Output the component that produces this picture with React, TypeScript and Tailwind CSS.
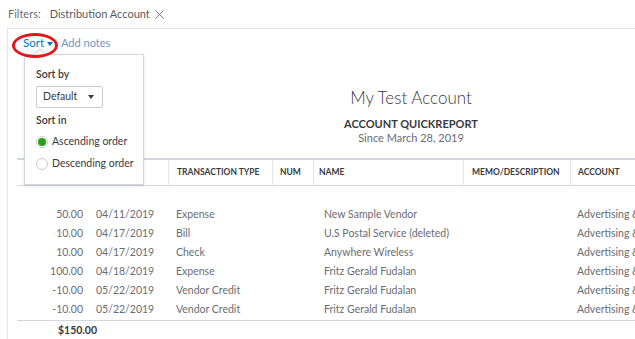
import { X } from 'lucide-react';

const rows = [
  { amount: '50.00', date: '04/11/2019', type: 'Expense', name: 'New Sample Vendor' },
  { amount: '10.00', date: '04/17/2019', type: 'Bill', name: 'U.S Postal Service (deleted)' },
  { amount: '10.00', date: '04/17/2019', type: 'Check', name: 'Anywhere Wireless' },
  { amount: '100.00', date: '04/18/2019', type: 'Expense', name: 'Fritz Gerald Fudalan' },
  { amount: '-10.00', date: '05/22/2019', type: 'Vendor Credit', name: 'Fritz Gerald Fudalan' },
  { amount: '-10.00', date: '05/22/2019', type: 'Vendor Credit', name: 'Fritz Gerald Fudalan' },
];

const cols = 'grid grid-cols-[71px_80px_104px_41px_150px_107px_200px]';

function SortMenu() {
  return (
    <div className="absolute left-[16px] top-[25px] w-[120px] h-[131px] bg-white border border-[#d4d7dc] shadow-[0_1px_3px_rgba(0,0,0,0.12)] z-10">
      {/* notch */}
      <div className="absolute left-[11px] -top-[5px] w-[8px] h-[8px] rotate-45 bg-white border-l border-t border-[#d4d7dc]" />
      <div className="pl-[11px] pt-[12px] text-[10.5px] text-[#393a3d]">
        <div className="font-semibold leading-[14px]">Sort by</div>
        <div className="mt-[5px] w-[67px] h-[22px] border border-[#c7cbd1] rounded-[2px] flex items-center justify-between pl-[6px] pr-[8px]">
          <span className="text-[#393a3d]">Default</span>
          <span className="w-0 h-0 border-l-[3px] border-r-[3px] border-t-[4px] border-l-transparent border-r-transparent border-t-[#393a3d]" />
        </div>
        <div className="mt-[5px] font-semibold leading-[14px]">Sort in</div>
        <div className="mt-[7px] flex items-center gap-[4px] h-[16px]">
          <span className="w-[12px] h-[12px] rounded-full border border-[#c7cbd1] flex items-center justify-center">
            <span className="w-[8px] h-[8px] rounded-full bg-[#2ca01c]" />
          </span>
          <span className="text-[#393a3d]">Ascending order</span>
        </div>
        <div className="mt-[6px] flex items-center gap-[4px] h-[16px]">
          <span className="w-[12px] h-[12px] rounded-full border border-[#c7cbd1]" />
          <span className="text-[#393a3d]">Descending order</span>
        </div>
      </div>
    </div>
  );
}

export default function App() {
  return (
    <div className="relative w-[635px] h-[339px] bg-white overflow-hidden font-['Lato',sans-serif] text-[#393a3d]">
      <div className="h-[28px] flex items-center pl-[8px] text-[11px]">
        <span className="text-[#6b6c72]">Filters:</span>
        <span className="ml-[9px] text-[#5a5b60]">Distribution Account</span>
        <X className="ml-[2px] w-[15px] h-[15px] text-[#6b6c72]" strokeWidth={1.4} />
      </div>

      <div className="relative ml-[7px] h-[311px] border-l border-t border-[#e3e5e8]">
        <div className="h-[28px] flex items-center pl-[15px] text-[11.5px]">
          <span className="text-[#0077c5]">Sort</span>
          <span className="ml-[3px] mt-[1px] w-0 h-0 border-l-[3.5px] border-r-[3.5px] border-t-[4px] border-l-transparent border-r-transparent border-t-[#0077c5]" />
          <span className="ml-[8px] text-[11px] text-[#6d95be]">Add notes</span>
        </div>

        {/* red highlight circle */}
        <div className="absolute left-[4px] top-[4px] w-[46px] h-[25px] rounded-[50%] border-[3px] border-[#e8141b] z-20" />

        <SortMenu />

        <div className="ml-[303px] w-[200px] text-center">
          <div className="mt-[30px] text-[17px] font-light leading-[22px] text-[#393a3d]">My Test Account</div>
          <div className="mt-[8px] text-[11px] font-bold leading-[14px] text-[#393a3d]">ACCOUNT QUICKREPORT</div>
          <div className="text-[11px] leading-[14px] text-[#6b6c72]">Since March 28, 2019</div>
        </div>

        <div className="ml-[9px] mt-[13px] w-[760px]">
          <div className={`${cols} h-[28px] border-t-2 border-b border-[#d4d7dc] text-[8.5px] font-bold text-[#393a3d] items-center`}>
            <div />
            <div />
            <div className="pl-[8px] border-l border-[#e3e5e8] h-full flex items-center">TRANSACTION TYPE</div>
            <div className="pl-[7px] border-l border-[#e3e5e8] h-full flex items-center">NUM</div>
            <div className="pl-[5px] border-l border-[#e3e5e8] h-full flex items-center">NAME</div>
            <div className="pl-[8px] border-l border-[#e3e5e8] h-full flex items-center">MEMO/DESCRIPTION</div>
            <div className="pl-[7px] border-l border-[#e3e5e8] h-full flex items-center">ACCOUNT</div>
          </div>
          <div className="h-[19px]" />
          <div className="border-b border-[#d4d7dc] pb-[1px]">
            {rows.map((r, i) => (
              <div key={i} className={`${cols} h-[19px] items-center text-[10.5px] text-[#6b6c72]`}>
                <div className="text-right pr-[5px]">{r.amount}</div>
                <div className="pl-[8px]">{r.date}</div>
                <div className="pl-[8px]">{r.type}</div>
                <div className="pl-[7px]"></div>
                <div className="pl-[11px]">{r.name}</div>
                <div className="pl-[8px]"></div>
                <div className="pl-[7px] whitespace-nowrap">Advertising &amp; Marketing</div>
              </div>
            ))}
          </div>
          <div className="h-[19px] flex items-center pl-[41px] text-[10.5px] font-bold text-[#393a3d]">$150.00</div>
        </div>
      </div>
    </div>
  );
}
